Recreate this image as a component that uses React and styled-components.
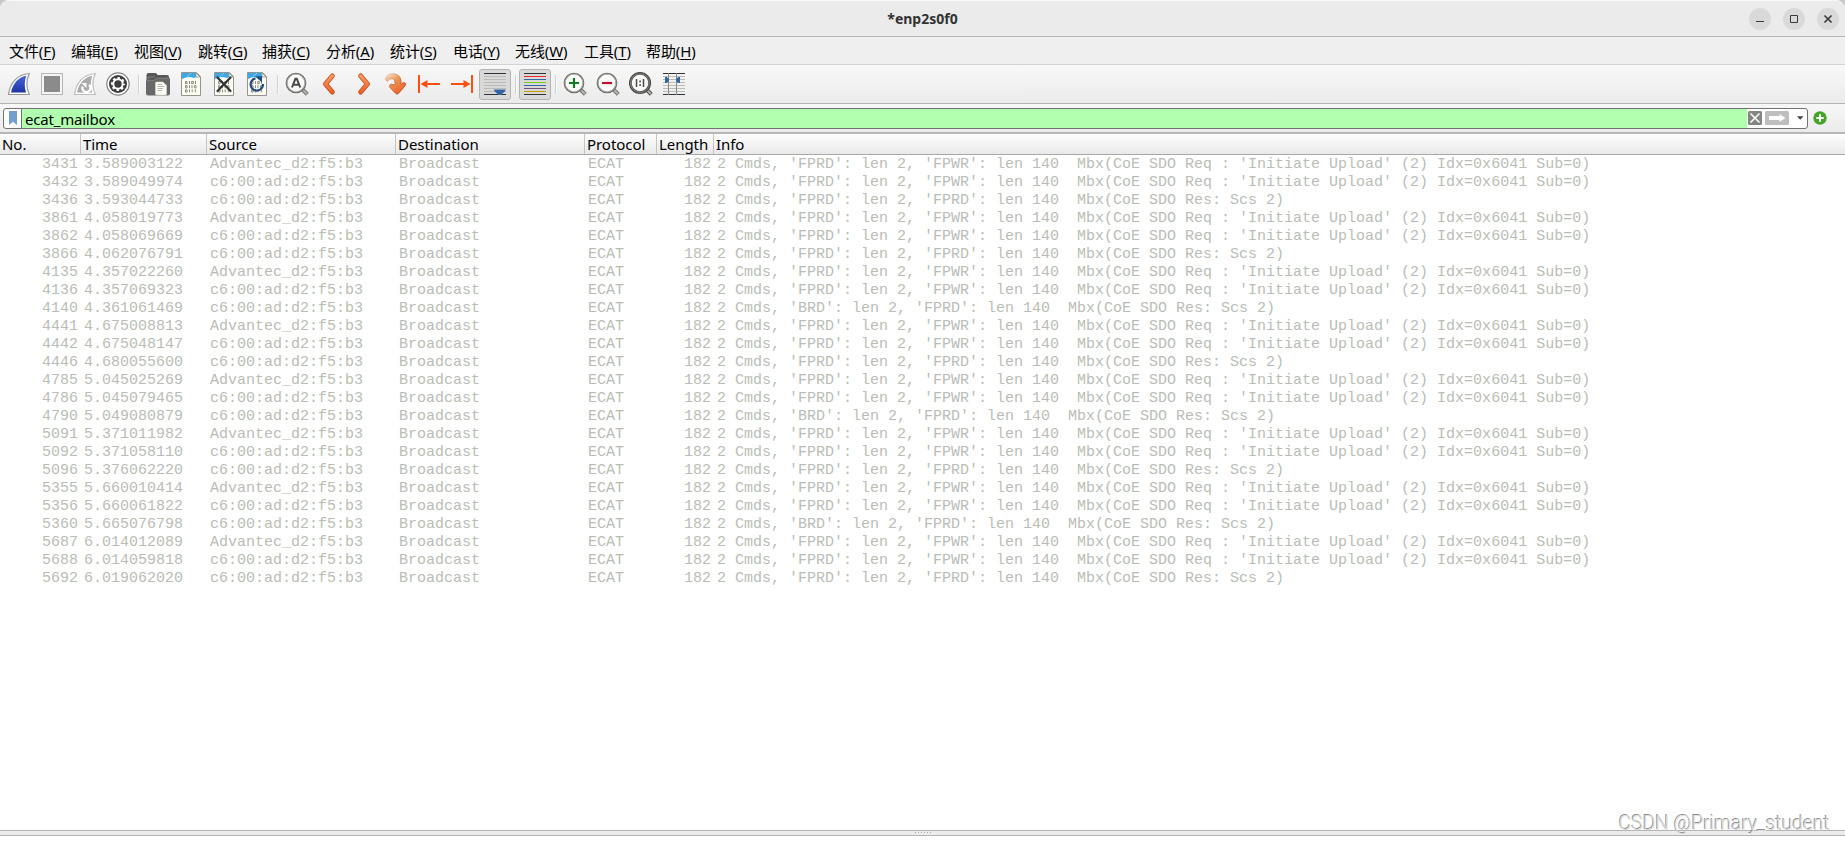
import { Fragment } from "react";
import styled, { createGlobalStyle } from "styled-components";

const GlobalStyle = createGlobalStyle`
  body {
    margin: 0;
    background: #c9c9c9;
    overflow: hidden;
  }
  * {
    box-sizing: border-box;
  }
`;

const uiFont = `"Noto Sans", "Noto Sans CJK SC", sans-serif`;

const Window = styled.div`
  position: relative;
  display: flex;
  flex-direction: column;
  width: 1845px;
  height: 843px;
  background: #fff;
  border-radius: 9px 9px 0 0;
  overflow: hidden;
  color: #000;
  font-family: ${uiFont};
`;

const TitleBar = styled.header`
  display: grid;
  grid-template-columns: 1fr auto 1fr;
  align-items: center;
  height: 37px;
  padding-right: 6px;
  background: #ebebeb;
  border-top: 1px solid #f8f8f8;
  border-bottom: 1px solid #b9b9b9;
`;

const Title = styled.div`
  grid-column: 2;
  padding-left: 6px;
  font-size: 14px;
  font-weight: 700;
  color: #333;
`;

const Controls = styled.div`
  display: flex;
  justify-content: flex-end;
  gap: 12px;
`;

const ControlButton = styled.div`
  width: 22px;
  height: 22px;
  border-radius: 50%;
  background: #d9d9d9;

  svg {
    display: block;
  }
`;

const MenuBar = styled.nav`
  display: flex;
  align-items: center;
  height: 28px;
  padding-left: 9px;
  background: #efefef;
  border-bottom: 1px solid #d3d3d3;
`;

const MenuItem = styled.div`
  width: ${(p) => p.$width}px;
  font-size: 15px;
  line-height: 22px;
  letter-spacing: -0.1px;
  white-space: nowrap;
`;

const Mnemonic = styled.span`
  text-decoration: underline;
  text-decoration-thickness: 1px;
  text-underline-offset: 2px;
`;

const ToolBar = styled.div`
  display: flex;
  align-items: center;
  gap: 1px;
  height: 39px;
  padding-left: 3px;
  background: linear-gradient(#f8f8f8, #ebebeb);
  border-bottom: 1px solid #b4b4b4;
`;

const ToolButton = styled.div`
  display: flex;
  align-items: center;
  justify-content: center;
  width: 32px;
  height: 31px;
  padding-bottom: 1px;
  border: 1px solid ${(p) => (p.$active ? "#b3b3b3" : "transparent")};
  border-radius: 3px;
  background: ${(p) => (p.$active ? "#d9d9d9" : "none")};
`;

const Separator = styled.div`
  width: 6px;
  height: 19px;
  background: linear-gradient(90deg, transparent 3px, #d0d0d0 3px, #d0d0d0 4px, #fafafa 4px, #fafafa 5px, transparent 5px);
`;

const FilterBar = styled.div`
  display: flex;
  align-items: center;
  height: 30px;
  padding: 0 0 0 3px;
  background: linear-gradient(#f7f7f7, #ebebeb);
  border-bottom: 2px solid #b7b7b7;
`;

const FilterField = styled.div`
  display: flex;
  align-items: stretch;
  width: 1805px;
  height: 21px;
  border: 1px solid #727272;
  border-radius: 3px;
  background: #fff;
  overflow: hidden;
`;

const BookmarkCell = styled.div`
  display: flex;
  align-items: center;
  justify-content: center;
  width: 18px;
  border-right: 1px solid #727272;
`;

const FilterText = styled.div`
  flex: 1;
  padding-left: 3px;
  background: #afffaf;
  font-size: 15px;
  line-height: 20px;
  letter-spacing: -0.2px;
`;

const FilterActions = styled.div`
  display: flex;
  align-items: center;
  width: 60px;
  padding-left: 1px;
`;

const AddButton = styled.div`
  display: flex;
  padding-left: 5px;
`;

const columns = "80px 126px 189px 189px 72px 57px 1fr";

const HeaderRow = styled.div`
  display: grid;
  grid-template-columns: ${columns};
  height: 21px;
  background: linear-gradient(#fdfdfd, #e9e9e9);
  border-bottom: 1px solid #a8a8a8;
`;

const HeaderCell = styled.div`
  padding-left: 2px;
  border-left: 1px solid ${(p) => (p.$first ? "transparent" : "#c4c4c4")};
  font-size: 15px;
  line-height: 20px;
  letter-spacing: -0.05px;
  white-space: nowrap;

  &:first-child {
    padding-left: 1px;
  }
`;

const PacketList = styled.div`
  flex: 1;
  padding-top: 1px;
  font: 15px/18px "Liberation Mono", monospace;
  color: #babdb6;
`;

const PacketRow = styled.div`
  display: grid;
  grid-template-columns: ${columns};
  height: 18px;
`;

const Cell = styled.div`
  padding: 0 2px 0 4px;
  text-align: ${(p) => (p.$right ? "right" : "left")};
  white-space: pre;
`;

const Splitter = styled.div`
  display: flex;
  align-items: center;
  justify-content: center;
  gap: 2px;
  height: 6px;
  margin-bottom: 7px;
  padding-bottom: 1px;
  background: #ececec;
  border-top: 1px solid #b4b4b4;
  border-bottom: 1px solid #b4b4b4;
`;

const Dot = styled.span`
  width: 1px;
  height: 1px;
  background: #a8a8a8;
`;

const Watermark = styled.div`
  position: absolute;
  right: 15px;
  bottom: 7px;
  font: 300 19.3px/24px Roboto, sans-serif;
  color: #dedede;
  text-shadow: -1px -1px 0 #8f8f8f;
  white-space: nowrap;
`;

const menus = [
  ["文件", "F", 62],
  ["编辑", "E", 63],
  ["视图", "V", 64],
  ["跳转", "G", 64],
  ["捕获", "C", 64],
  ["分析", "A", 64],
  ["统计", "S", 63],
  ["电话", "Y", 62],
  ["无线", "W", 69],
  ["工具", "T", 62],
  ["帮助", "H", 60],
];

const ADV = "Advantec_d2:f5:b3";
const MAC = "c6:00:ad:d2:f5:b3";
const UPLOAD = "2 Cmds, 'FPRD': len 2, 'FPWR': len 140  Mbx(CoE SDO Req : 'Initiate Upload' (2) Idx=0x6041 Sub=0)";
const RES = "2 Cmds, 'FPRD': len 2, 'FPRD': len 140  Mbx(CoE SDO Res: Scs 2)";
const BRD = "2 Cmds, 'BRD': len 2, 'FPRD': len 140  Mbx(CoE SDO Res: Scs 2)";

const packets = [
  [3431, "3.589003122", ADV, UPLOAD],
  [3432, "3.589049974", MAC, UPLOAD],
  [3436, "3.593044733", MAC, RES],
  [3861, "4.058019773", ADV, UPLOAD],
  [3862, "4.058069669", MAC, UPLOAD],
  [3866, "4.062076791", MAC, RES],
  [4135, "4.357022260", ADV, UPLOAD],
  [4136, "4.357069323", MAC, UPLOAD],
  [4140, "4.361061469", MAC, BRD],
  [4441, "4.675008813", ADV, UPLOAD],
  [4442, "4.675048147", MAC, UPLOAD],
  [4446, "4.680055600", MAC, RES],
  [4785, "5.045025269", ADV, UPLOAD],
  [4786, "5.045079465", MAC, UPLOAD],
  [4790, "5.049080879", MAC, BRD],
  [5091, "5.371011982", ADV, UPLOAD],
  [5092, "5.371058110", MAC, UPLOAD],
  [5096, "5.376062220", MAC, RES],
  [5355, "5.660010414", ADV, UPLOAD],
  [5356, "5.660061822", MAC, UPLOAD],
  [5360, "5.665076798", MAC, BRD],
  [5687, "6.014012089", ADV, UPLOAD],
  [5688, "6.014059818", MAC, UPLOAD],
  [5692, "6.019062020", MAC, RES],
];

const headers = ["No.", "Time", "Source", "Destination", "Protocol", "Length", "Info"];

function Fin({ fill, stroke }) {
  return (
    <>
      <path d="M1.5 22.5C3 11 10 2.5 22.3 1.5C19.3 8 19.3 16 22.3 22.5Z" fill="#fff" stroke={stroke} strokeWidth="1.2" />
      <path d="M4 20.5C6 11.5 11 5.5 19.3 3.8C17.3 9.5 17.3 15 19 20.5Z" fill={fill} />
    </>
  );
}

function CaptureFile({ children }) {
  return (
    <>
      <path d="M2.5.5H17.5L21.5 4.5V23.5H2.5Z" fill="#fdfdf2" stroke="#92958d" />
      <path d="M3 1H17L17.5 5L15 6C10 4 7 5 3 7Z" fill="#3ba7e5" />
      <path d="M12 1L8 4.4" stroke="#8ccdf2" />
      <path d="M17 1V5H21Z" fill="#f4f4ee" stroke="#92958d" strokeWidth=".8" />
      <g fill="none" stroke="#8c8c84" strokeWidth="1">
        <path d="M6.5 9.5h1.6v2.2H6.5zM10.5 9v3M12.7 9.5h1.6v2.2h-1.6zM16.5 9v3" />
        <path d="M6.5 13.7h1.6v2.2H6.5zM10.5 13.2v3M13 13.2v3M15.4 13.7h1.6v2.2h-1.6z" />
        <path d="M6.5 17.9h1.6v2.2H6.5zM10.5 17.4v3M13.2 17.4v3M16.3 17.4v3" />
      </g>
      {children}
    </>
  );
}

function Lens({ children, bold }) {
  return (
    <>
      <path d="M17.5 17.5L22.3 22.3" stroke={bold ? "#4d4f4b" : "#74766f"} strokeWidth="4" />
      <path d="M17.5 17.5L22 22" stroke="#b6b8b0" strokeWidth="1.8" />
      <circle cx="11" cy="11" r={bold ? 9.7 : 9.4} fill="#fbfbfa" stroke={bold ? "#4b4d49" : "#686a64"} strokeWidth={bold ? 2.8 : 1.9} />
      <circle cx="11" cy="11" r={bold ? 9.4 : 8.9} fill="none" stroke={bold ? "#9b9d97" : "#c9cbc5"} strokeWidth=".7" />
      {children}
    </>
  );
}

function TextLines({ colors }) {
  return colors.map((color, i) => (
    <rect key={i} x="1" y={1 + i * 3} width="22" height="1" fill={color} />
  ));
}

const gray = "#babdb6";
const dark = "#2e3436";

const icons = {
  start: <Fin fill="url(#finBlue)" stroke="#999" />,
  stop: (
    <>
      <rect x="1.5" y="1.5" width="21" height="21" fill="#f5f5f5" stroke="#b5b5b5" />
      <rect x="4" y="4" width="16" height="16" fill="#8b8b8b" />
    </>
  ),
  restart: (
    <>
      <Fin fill="#aaa" stroke="#bdbdbd" />
      <path d="M9.7 14.5A4 4 0 1 0 16 12.8" fill="none" stroke="#fff" strokeWidth="2.2" />
      <path d="M8.5 11H13.5V16Z" fill="#fff" />
    </>
  ),
  options: (
    <>
      <circle cx="12" cy="12" r="11.2" fill="#fff" stroke="#858585" strokeWidth="1.2" />
      <circle cx="12" cy="12" r="9" fill="#3d3d3d" />
      <circle cx="12" cy="12" r="4.7" fill="none" stroke="#fff" strokeWidth="2" />
      <circle cx="12" cy="12" r="6" fill="none" stroke="#fff" strokeWidth="2" strokeDasharray="2.4 2.312" strokeDashoffset="1.2" />
    </>
  ),
  open: (
    <>
      <path d="M.5 3Q.5 1 2.5 1H9Q11 1 11.5 3H21Q23 3 23 5V20H.5Z" fill="#555" />
      <path d="M2.2 7V5H7.5L9 3.7" stroke="#858585" fill="none" />
      <path d="M0 9Q0 7.5 1.5 7.5H8L10 5.5H22.5Q24 5.5 24 7V21.5Q24 23.5 22 23.5H2Q0 23.5 0 21.5Z" fill="#686868" />
      <path d="M.5 8.5H8L10.5 6.3H23.5" stroke="#828282" fill="none" strokeWidth=".8" />
      <path d="M9.5 11Q9.5 10 10.5 10H17L20.5 13.5V22Q20.5 23 19.5 23H10.5Q9.5 23 9.5 22Z" fill="#fbfbf5" stroke="#d8d8ce" strokeWidth=".6" />
      <path d="M11.5 12.5H16M11.5 14.5H18M11.5 16.5H17M11.5 18.5H16" stroke="#b9b9a9" strokeWidth="1" />
    </>
  ),
  save: <CaptureFile />,
  close: (
    <CaptureFile>
      <path d="M5.5 5.5L18.5 19M18.5 5.5L5.5 19" stroke="#2e3436" strokeWidth="2.2" strokeLinecap="round" />
    </CaptureFile>
  ),
  reload: (
    <CaptureFile>
      <path d="M10.5 6.3A6.2 6.2 0 1 0 18 12" fill="none" stroke="#204a87" strokeWidth="2.2" />
      <path d="M10 4.2H17V10.5Z" fill="#204a87" />
    </CaptureFile>
  ),
  find: (
    <Lens>
      <path d="M7 15.5L10.4 6.8H11.8L15.3 15.5M8.5 12.8H13.7" stroke="#4a4a4a" strokeWidth="2" fill="none" />
    </Lens>
  ),
  back: (
    <>
      <path d="M14.3 4L7.5 12L14.3 20" fill="none" stroke="#c94c1b" strokeWidth="5" strokeLinejoin="round" strokeLinecap="round" />
      <path d="M14.3 4L7.5 12L14.3 20" fill="none" stroke="url(#orange)" strokeWidth="3.4" strokeLinejoin="round" strokeLinecap="round" />
    </>
  ),
  forward: (
    <>
      <path d="M9.7 4L16.5 12L9.7 20" fill="none" stroke="#c94c1b" strokeWidth="5" strokeLinejoin="round" strokeLinecap="round" />
      <path d="M9.7 4L16.5 12L9.7 20" fill="none" stroke="url(#orange)" strokeWidth="3.4" strokeLinejoin="round" strokeLinecap="round" />
    </>
  ),
  jump: (
    <path
      d="M1.5 7C2.5 3.5 5 1.5 9 1.7C15 2 17.3 5.5 17 12.5L19 10.8Q21 10 21.7 12.2Q21.8 13.5 14 21.7Q12.5 22.5 11.5 21.2L5.8 15.3Q5 12.5 7.3 12.1L11 13.3C11.5 8.5 10 6.7 7.5 6.8C5.5 6.8 3.7 8 3.5 9.5Q2 8.5 1.5 7Z"
      fill="url(#orangeFade)"
      stroke="url(#rimFade)"
    />
  ),
  first: (
    <g fill="#fc4f13">
      <rect x="1" y="3" width="2" height="18" />
      <path d="M3.5 12L10.5 8V11H23V13H10.5V16Z" />
    </g>
  ),
  last: (
    <g fill="#fc4f13">
      <rect x="21" y="3" width="2" height="18" />
      <path d="M20.5 12L13.5 8V11H1V13H13.5V16Z" />
    </g>
  ),
  autoscroll: (
    <>
      <TextLines colors={[dark, gray, gray, gray, gray, gray, gray, dark]} />
      <path d="M11 17.5H22.5Q22.5 19.5 20 21L18.5 23H15L13.5 21Q11 19.5 11 17.5Z" fill="#3465a4" />
    </>
  ),
  colorize: <TextLines colors={[dark, "#ef2929", "#3465a4", "#73d216", "#3465a4", "#75507b", "#c4a000", dark]} />,
  zoomIn: (
    <Lens>
      <path d="M11 6V16M6 11H16" stroke="#0d7d23" strokeWidth="2.2" />
    </Lens>
  ),
  zoomOut: (
    <Lens>
      <path d="M6 11H16" stroke="#c4122f" strokeWidth="2.2" />
    </Lens>
  ),
  zoomReset: (
    <Lens bold>
      <path d="M7.5 7V15M14.5 7V15" stroke="#4a4a4a" strokeWidth="1.5" />
      <path d="M10.3 8.5H11.9V10.2H10.3ZM10.3 12.2H11.9V13.9H10.3Z" fill="#4a4a4a" />
    </Lens>
  ),
  resize: (
    <>
      <TextLines colors={[dark, gray, gray, gray, gray, gray, gray, dark]} />
      <path d="M6.5 1V23M14.5 1V23" stroke="#888a85" />
      <path d="M3 5H4.5Q7 6 7 8Q7 10 4.5 11H3ZM18 5H16.5Q14 6 14 8Q14 10 16.5 11H18Z" fill="#3465a4" />
    </>
  ),
};

const toolGroups = [
  ["start", "stop", "restart", "options"],
  ["open", "save", "close", "reload"],
  ["find", "back", "forward", "jump", "first", "last", "autoscroll"],
  ["colorize"],
  ["zoomIn", "zoomOut", "zoomReset", "resize"],
];

const activeTools = ["autoscroll", "colorize"];

const HiddenSvg = styled.svg`
  position: absolute;
`;

function IconDefs() {
  return (
    <HiddenSvg width="0" height="0">
      <defs>
        <linearGradient id="finBlue" x1="0" y1="0" x2="0" y2="1">
          <stop offset="0" stopColor="#4763df" />
          <stop offset="1" stopColor="#1c36a2" />
        </linearGradient>
        <linearGradient id="orange" gradientUnits="userSpaceOnUse" x1="12" y1="2" x2="12" y2="22">
          <stop offset="0" stopColor="#f5a36a" />
          <stop offset="1" stopColor="#ee5a22" />
        </linearGradient>
        <linearGradient id="orangeFade" x1="0" y1="0" x2=".7" y2="1">
          <stop offset="0" stopColor="#f7c9a2" stopOpacity=".4" />
          <stop offset=".4" stopColor="#ef9a5c" />
          <stop offset="1" stopColor="#ec5e28" />
        </linearGradient>
        <linearGradient id="rimFade" x1="0" y1="0" x2=".7" y2="1">
          <stop offset="0" stopColor="#e0a070" stopOpacity=".3" />
          <stop offset=".5" stopColor="#d0703a" />
          <stop offset="1" stopColor="#bf4316" />
        </linearGradient>
      </defs>
    </HiddenSvg>
  );
}

function WindowControls() {
  return (
    <Controls>
      {["M7 13.5H15", "M7.5 7.5H14.5V14.5H7.5Z", "M7.5 7.5L14.5 14.5M14.5 7.5L7.5 14.5"].map((d, i) => (
        <ControlButton key={d}>
          <svg width="22" height="22" fill="none" stroke="#3a3a3a" strokeWidth={i === 2 ? 1.7 : 1}>
            <path d={d} />
          </svg>
        </ControlButton>
      ))}
    </Controls>
  );
}

function DisplayFilter() {
  return (
    <FilterBar>
      <FilterField>
        <BookmarkCell>
          <svg width="8" height="14">
            <path d="M0 0H8V14L4 10.8L0 14Z" fill="#729fcf" />
          </svg>
        </BookmarkCell>
        <FilterText>ecat_mailbox</FilterText>
        <FilterActions>
          <svg width="58" height="14">
            <rect width="14" height="14" rx="1.5" fill="#848680" />
            <path d="M2.5 2.5L11.5 11.5M11.5 2.5L2.5 11.5" stroke="#fff" strokeWidth="1.5" />
            <rect x="17" width="24" height="14" rx="1.5" fill="#bebebe" />
            <path d="M21 5H31.5V3L37.5 7L31.5 11V9H21Z" fill="#fff" />
            <path d="M49 5.2H55.5L52.2 8.8Z" fill="#444" />
          </svg>
        </FilterActions>
      </FilterField>
      <AddButton>
        <svg width="14" height="14">
          <circle cx="7" cy="7" r="6.7" fill="#43a428" />
          <path d="M7 3.3V10.7M3.3 7H10.7" stroke="#fff" strokeWidth="2" />
        </svg>
      </AddButton>
    </FilterBar>
  );
}

export default function App() {
  return (
    <>
      <GlobalStyle />
      <IconDefs />
      <Window>
        <TitleBar>
          <Title>*enp2s0f0</Title>
          <WindowControls />
        </TitleBar>
        <MenuBar>
          {menus.map(([label, key, width]) => (
            <MenuItem key={key} $width={width}>
              {label}(<Mnemonic>{key}</Mnemonic>)
            </MenuItem>
          ))}
        </MenuBar>
        <ToolBar>
          {toolGroups.map((group, i) => (
            <Fragment key={i}>
              {i > 0 && <Separator />}
              {group.map((name) => (
                <ToolButton key={name} $active={activeTools.includes(name)}>
                  <svg width="24" height="24" viewBox="0 0 24 24">
                    {icons[name]}
                  </svg>
                </ToolButton>
              ))}
            </Fragment>
          ))}
        </ToolBar>
        <DisplayFilter />
        <HeaderRow>
          {headers.map((name, i) => (
            <HeaderCell key={name} $first={i === 0}>
              {name}
            </HeaderCell>
          ))}
        </HeaderRow>
        <PacketList>
          {packets.map(([no, time, source, info]) => (
            <PacketRow key={no}>
              <Cell $right>{no}</Cell>
              <Cell>{time}</Cell>
              <Cell>{source}</Cell>
              <Cell>Broadcast</Cell>
              <Cell>ECAT</Cell>
              <Cell $right>182</Cell>
              <Cell>{info}</Cell>
            </PacketRow>
          ))}
        </PacketList>
        <Splitter>
          {[0, 1, 2, 3, 4, 5].map((i) => (
            <Dot key={i} />
          ))}
        </Splitter>
        <Watermark>CSDN @Primary_student</Watermark>
      </Window>
    </>
  );
}
